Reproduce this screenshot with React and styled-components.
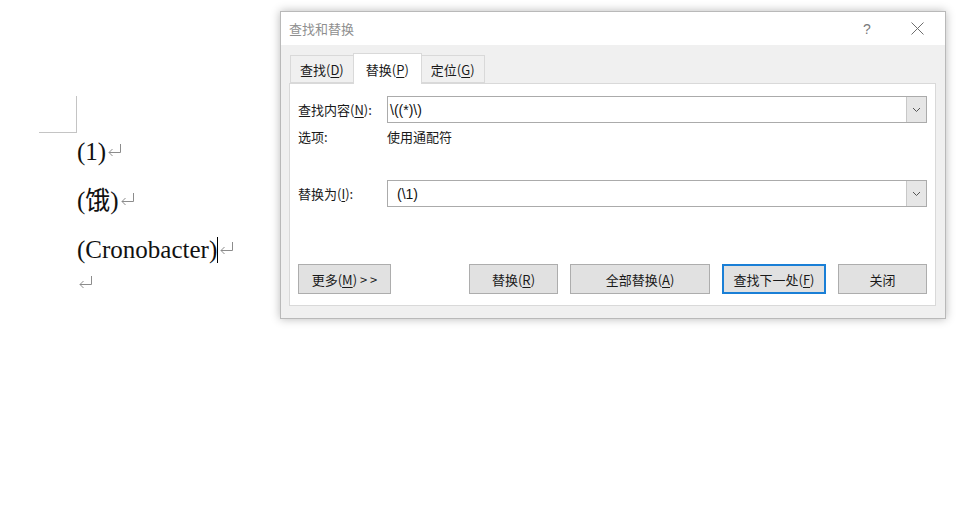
import React from "react";
import styled, { createGlobalStyle } from "styled-components";

const GlobalStyle = createGlobalStyle`
  html, body {
    margin: 0;
    padding: 0;
    background: #ffffff;
  }
  body {
    font-family: "Noto Sans CJK SC", "Liberation Sans", sans-serif;
  }
`;

const Page = styled.div`
  position: relative;
  width: 960px;
  height: 518px;
  overflow: hidden;
  background: #ffffff;
`;

// --- document side ---
const Doc = styled.div`
  display: flex;
  flex-direction: column;
  padding-top: 96px;
`;

const CornerMark = styled.div`
  width: 37px;
  height: 36px;
  margin-left: 39px;
  border-right: 1px solid #c4c4c4;
  border-bottom: 1px solid #c4c4c4;
`;

const Paragraphs = styled.div`
  margin-top: -6px;
  padding-left: 77px;
  display: flex;
  flex-direction: column;
`;

const Para = styled.div`
  font-family: "Liberation Serif", "Noto Sans CJK SC", serif;
  font-size: 25px;
  line-height: ${({ $empty }) => ($empty ? "20px" : "49px")};
  height: ${({ $empty }) => ($empty ? "20px" : "49px")};
  color: #111;
  white-space: nowrap;
`;

const MarkSvg = styled.svg`
  display: inline-block;
  vertical-align: 4px;
  margin-left: 1px;
`;

const Caret = styled.span`
  display: inline-block;
  width: 0;
  height: 26px;
  border-left: 1px solid #000;
  vertical-align: -5px;
`;

// --- dialog ---
const Dialog = styled.div`
  position: absolute;
  left: 280px;
  top: 11px;
  width: 666px;
  height: 308px;
  box-sizing: border-box;
  border: 1px solid #b9b9b9;
  background: #f0f0f0;
  box-shadow: 0 0 9px rgba(0, 0, 0, 0.28);
  display: flex;
  flex-direction: column;
  font-size: 13px;
  color: #1a1a1a;
`;

const TitleBar = styled.div`
  height: 33px;
  background: #ffffff;
  display: flex;
  align-items: center;
  padding: 0 3px 0 8px;
  flex-shrink: 0;
`;

const Title = styled.div`
  flex: 1;
  color: #8f8f8f;
  font-size: 13px;
`;

const TitleButton = styled.div`
  width: 50px;
  height: 33px;
  display: flex;
  align-items: center;
  justify-content: center;
  color: #7a7a7a;
  font-family: "Liberation Sans", sans-serif;
  font-size: 14px;
`;

const Body = styled.div`
  flex: 1;
  display: flex;
  flex-direction: column;
  padding: 8px 9px 12px 8px;
`;

const TabRow = styled.div`
  display: flex;
  align-items: flex-end;
  margin-left: 1px;
  position: relative;
  z-index: 1;
`;

const Tab = styled.div`
  box-sizing: border-box;
  height: ${({ $active }) => ($active ? "31px" : "28px")};
  margin-bottom: ${({ $active }) => ($active ? "-1px" : "0")};
  padding: 0 ${({ $active }) => ($active ? "12px" : "9px")};
  display: flex;
  align-items: center;
  background: ${({ $active }) => ($active ? "#ffffff" : "#f0f0f0")};
  border: 1px solid #d9d9d9;
  border-bottom: ${({ $active }) => ($active ? "none" : "1px solid #d9d9d9")};
  margin-left: ${({ $active }) => ($active ? "-1px" : "0")};
  margin-right: ${({ $active }) => ($active ? "-1px" : "0")};
  position: relative;
  z-index: ${({ $active }) => ($active ? 2 : 0)};
  font-size: 13px;
  color: #1a1a1a;
`;

const Panel = styled.div`
  box-sizing: border-box;
  height: 223px;
  background: #ffffff;
  border: 1px solid #d9d9d9;
  padding: 12px 8px 11px 8px;
  display: flex;
  flex-direction: column;
`;

const FieldRow = styled.div`
  display: grid;
  grid-template-columns: 89px 1fr;
  align-items: center;
  margin-top: ${({ $gap }) => $gap || 0}px;
`;

const Label = styled.div`
  font-size: 13px;
  color: #1a1a1a;
  line-height: 16px;
`;

const Combo = styled.div`
  box-sizing: border-box;
  height: 27px;
  border: 1px solid #ababab;
  display: flex;
  align-items: stretch;
  background: #ffffff;
`;

const ComboText = styled.div`
  flex: 1;
  display: flex;
  align-items: center;
  padding-left: ${({ $indent }) => $indent || 2}px;
  font-family: "Liberation Sans", "Noto Sans CJK SC", sans-serif;
  font-size: 14px;
  color: #111;
  white-space: pre;
`;

const ComboButton = styled.div`
  width: 19px;
  border-left: 1px solid #c8c8c8;
  background: #e6e6e6;
  display: flex;
  align-items: center;
  justify-content: center;
`;

const Spacer = styled.div`
  flex: 1;
`;

const ButtonRow = styled.div`
  display: flex;
  align-items: center;
  gap: 12px;
`;

const Button = styled.div`
  box-sizing: border-box;
  width: ${({ $w }) => $w}px;
  height: 30px;
  display: flex;
  align-items: center;
  justify-content: center;
  background: #e1e1e1;
  border: ${({ $primary }) => ($primary ? "2px solid #1a7fd6" : "1px solid #adadad")};
  font-size: 13px;
  color: #1a1a1a;
  margin-left: ${({ $push }) => ($push ? "auto" : "0")};
  white-space: pre;
`;

const Key = styled.u`
  text-underline-offset: 2px;
`;

const ReturnMark = () => (
  <MarkSvg width="15" height="12" viewBox="0 0 15 12">
    <path d="M13.5 0 V8.5 H2" fill="none" stroke="#8c8c8c" strokeWidth="1" />
    <path d="M5.5 5 L2 8.5 L5.5 12" fill="none" stroke="#8c8c8c" strokeWidth="1" />
  </MarkSvg>
);

const Chevron = () => (
  <svg width="9" height="6" viewBox="0 0 9 6">
    <path d="M1 1 L4.5 4.5 L8 1" fill="none" stroke="#555" strokeWidth="1" />
  </svg>
);

const CloseIcon = () => (
  <svg width="13" height="13" viewBox="0 0 13 13">
    <path d="M0.5 0.5 L12.5 12.5 M12.5 0.5 L0.5 12.5" stroke="#6e6e6e" strokeWidth="1" />
  </svg>
);

export default function App() {
  return (
    <Page>
      <GlobalStyle />
      <Doc>
        <CornerMark />
        <Paragraphs>
          <Para>
            (1)
            <ReturnMark />
          </Para>
          <Para>
            (饿)
            <ReturnMark />
          </Para>
          <Para>
            (Cronobacter)<Caret />
            <ReturnMark />
          </Para>
          <Para $empty>
            <ReturnMark />
          </Para>
        </Paragraphs>
      </Doc>

      <Dialog>
        <TitleBar>
          <Title>查找和替换</Title>
          <TitleButton>?</TitleButton>
          <TitleButton>
            <CloseIcon />
          </TitleButton>
        </TitleBar>
        <Body>
          <TabRow>
            <Tab>
              查找(<Key>D</Key>)
            </Tab>
            <Tab $active>
              替换(<Key>P</Key>)
            </Tab>
            <Tab>
              定位(<Key>G</Key>)
            </Tab>
          </TabRow>
          <Panel>
            <FieldRow>
              <Label>
                查找内容(<Key>N</Key>):
              </Label>
              <Combo>
                <ComboText>{"\\((*)\\)"}</ComboText>
                <ComboButton>
                  <Chevron />
                </ComboButton>
              </Combo>
            </FieldRow>
            <FieldRow $gap={6}>
              <Label>选项:</Label>
              <Label>使用通配符</Label>
            </FieldRow>
            <FieldRow $gap={35}>
              <Label>
                替换为(<Key>I</Key>):
              </Label>
              <Combo>
                <ComboText $indent={9}>{"(\\1)"}</ComboText>
                <ComboButton>
                  <Chevron />
                </ComboButton>
              </Combo>
            </FieldRow>
            <Spacer />
            <ButtonRow>
              <Button $w={93}>
                更多(<Key>M</Key>) &gt; &gt;
              </Button>
              <Button $w={89} $push>
                替换(<Key>R</Key>)
              </Button>
              <Button $w={140}>
                全部替换(<Key>A</Key>)
              </Button>
              <Button $w={104} $primary>
                查找下一处(<Key>F</Key>)
              </Button>
              <Button $w={89}>关闭</Button>
            </ButtonRow>
          </Panel>
        </Body>
      </Dialog>
    </Page>
  );
}
